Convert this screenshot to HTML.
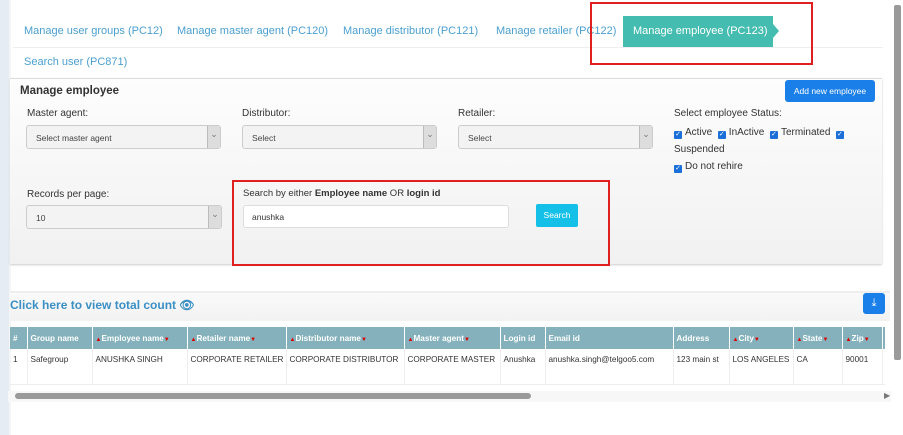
<!DOCTYPE html><html><head><style>
*{margin:0;padding:0;box-sizing:border-box}
body{width:903px;height:435px;background:#fff;font-family:"Liberation Sans",sans-serif;position:relative;overflow:hidden;font-size:10px;color:#333}
.a{position:absolute;white-space:nowrap}
.tab{color:#4a9fd0;font-size:11px}
.sel{position:absolute;height:24px;border:1px solid #ccc;border-radius:3px;background:#f3f3f3;font-size:8.5px;color:#444;padding:7px 0 0 9px}
.sel:after{content:"⌄";position:absolute;right:0;top:0;width:12px;height:22px;background:#ddd;border-left:1px solid #bbb;font-size:9px;text-align:center;line-height:16px;color:#777}
.cb{display:inline-block;width:8px;height:8px;background:#1a6fd8;border-radius:1px;margin-right:3px;vertical-align:-1px;color:#fff;font-size:7px;line-height:8px;text-align:center}
.tw{position:absolute;left:10px;top:327px;width:875px;height:58px;overflow:hidden}
table{border-collapse:collapse;font-size:8.2px;table-layout:fixed;width:892px}
th{background:#84b1bb;color:#fff;height:22px;text-align:left;padding:0 3px;border-right:1px solid #fff;font-weight:bold;white-space:nowrap;overflow:hidden}
td{height:35px;vertical-align:top;padding:6px 3px 0;border-right:1px solid #eee;border-bottom:1px solid #eee;white-space:nowrap;color:#333;overflow:hidden}
.u{color:#d00;font-size:6px}
</style></head><body>
<div class="a" style="left:0;top:0;width:9px;height:435px;background:#e6ecf4"></div>
<div class="a" style="left:9px;top:0;width:2px;height:435px;background:#f5f5f5"></div>
<div class="a" style="left:894px;top:5px;width:7px;height:355px;background:#9a9a9a;border-radius:2px"></div>
<div class="a tab" style="left:24px;top:25px">Manage user groups (PC12)</div>
<div class="a tab" style="left:177px;top:25px">Manage master agent (PC120)</div>
<div class="a tab" style="left:343px;top:25px">Manage distributor (PC121)</div>
<div class="a tab" style="left:496px;top:25px">Manage retailer (PC122)</div>
<div class="a" style="left:623px;top:16px;width:150px;height:31px;background:#45bcb0"></div>
<div class="a" style="left:773px;top:24px;width:0;height:0;border-top:7px solid transparent;border-bottom:7px solid transparent;border-left:6px solid #45bcb0"></div>
<div class="a" style="left:633px;top:25px;color:#fff;font-size:11px">Manage employee (PC123)</div>
<div class="a" style="left:13px;top:47px;width:870px;height:1px;background:#eee"></div>
<div class="a tab" style="left:24px;top:56px">Search user (PC871)</div>
<div class="a" style="left:590px;top:2px;width:223px;height:63px;border:2px solid #e02020"></div>
<div class="a" style="left:10px;top:78px;width:872px;height:186px;background:linear-gradient(#fdfdfd,#f1f1f1);border-top:1px solid #ddd;box-shadow:0 1px 2px #ccc"></div>
<div class="a" style="left:20px;top:85px;font-weight:bold;font-size:11.5px;color:#333">Manage employee</div>
<div class="a" style="left:785px;top:80px;width:90px;height:22px;background:#1a7fe8;border-radius:3px;color:#fff;font-size:8.5px;text-align:center;line-height:22px">Add new employee</div>
<div class="a" style="left:27px;top:108px">Master agent:</div>
<div class="a" style="left:242px;top:108px">Distributor:</div>
<div class="a" style="left:458px;top:108px">Retailer:</div>
<div class="sel" style="left:26px;top:125px;width:195px">Select master agent</div>
<div class="sel" style="left:242px;top:125px;width:195px">Select</div>
<div class="sel" style="left:458px;top:125px;width:195px">Select</div>
<div class="a" style="left:674px;top:108px">Select employee Status:</div>
<div class="a" style="left:674px;top:127px"><span class="cb">✓</span>Active &nbsp;<span class="cb">✓</span>InActive &nbsp;<span class="cb">✓</span>Terminated &nbsp;<span class="cb">✓</span></div>
<div class="a" style="left:674px;top:144px">Suspended</div>
<div class="a" style="left:674px;top:161px"><span class="cb">✓</span>Do not rehire</div>
<div class="a" style="left:27px;top:189px">Records per page:</div>
<div class="sel" style="left:26px;top:205px;width:196px">10</div>
<div class="a" style="left:243px;top:188px;font-size:9.5px">Search by either <b>Employee name</b> OR <b>login id</b></div>
<div class="a" style="left:243px;top:205px;width:266px;height:23px;border:1px solid #ddd;border-radius:3px;background:#fff;font-size:8.5px;padding:6px 0 0 8px">anushka</div>
<div class="a" style="left:536px;top:204px;width:42px;height:23px;background:#15c0e8;border-radius:2px;color:#fff;font-size:8.5px;text-align:center;line-height:23px">Search</div>
<div class="a" style="left:232px;top:180px;width:378px;height:86px;border:2px solid #e02020"></div>
<div class="a" style="left:10px;top:291px;width:880px;height:30px;background:linear-gradient(#fafafa,#f2f2f2);border-top:2px solid #eee"></div>
<div class="a" style="left:10px;top:298px;font-weight:bold;font-size:12px;color:#3a8fc4">Click here to view total count <span style="font-size:12px">👁</span></div>
<div class="a" style="left:863px;top:293px;width:22px;height:21px;background:#1a7fe8;border-radius:3px;color:#fff;text-align:center;line-height:20px;font-size:11px">⤓</div>
<div class="tw"><table><colgroup><col style="width:17px"><col style="width:65px"><col style="width:95px"><col style="width:99px"><col style="width:118px"><col style="width:96px"><col style="width:45px"><col style="width:128px"><col style="width:56px"><col style="width:64px"><col style="width:49px"><col style="width:40px"><col style="width:20px"></colgroup><tr>
<th>#</th><th>Group name</th><th><span class="u">▲</span>Employee name<span class="u">▼</span></th><th><span class="u">▲</span>Retailer name<span class="u">▼</span></th><th><span class="u">▲</span>Distributor name<span class="u">▼</span></th><th><span class="u">▲</span>Master agent<span class="u">▼</span></th><th>Login id</th><th>Email id</th><th>Address</th><th><span class="u">▲</span>City<span class="u">▼</span></th><th><span class="u">▲</span>State<span class="u">▼</span></th><th><span class="u">▲</span>Zip<span class="u">▼</span></th><th>C</th></tr>
<tr><td>1</td><td>Safegroup</td><td>ANUSHKA SINGH</td><td>CORPORATE RETAILER</td><td>CORPORATE DISTRIBUTOR</td><td>CORPORATE MASTER</td><td>Anushka</td><td>anushka.singh@telgoo5.com</td><td>123 main st</td><td>LOS ANGELES</td><td>CA</td><td>90001</td><td>10</td></tr></table></div>
<div class="a" style="left:8px;top:391px;width:883px;height:11px;background:#f7f7f7"></div>
<div class="a" style="left:15px;top:393px;width:516px;height:6px;background:#9a9a9a;border-radius:3px"></div>
<div class="a" style="left:884px;top:391px;font-size:8px;color:#777">▶</div>
</body></html>
